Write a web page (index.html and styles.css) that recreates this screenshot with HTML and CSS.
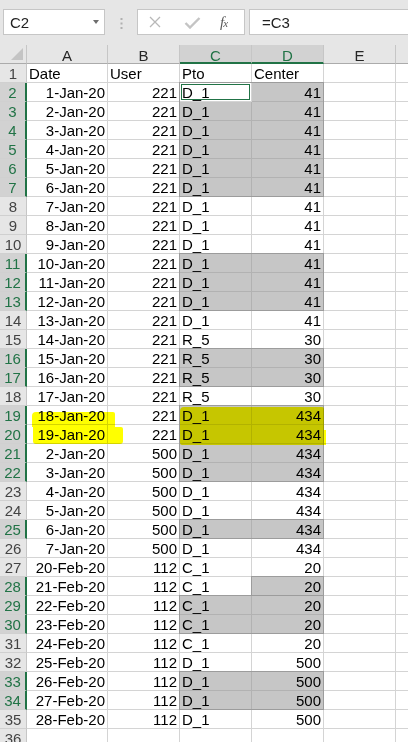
FILE: index.html
```html
<!DOCTYPE html>
<html>
<head>
<meta charset="utf-8">
<link rel="stylesheet" href="styles.css">
</head>
<body>
<div class="app">
  <div class="topbar">
    <div class="namebox"><span class="nbtext">C2</span><span class="caret"></span></div>
    <svg class="dots" width="3" height="11" viewBox="0 0 3 11"><rect x="0.5" y="0" width="2" height="2" fill="#b0b0b0"/><rect x="0.5" y="4.5" width="2" height="2" fill="#b0b0b0"/><rect x="0.5" y="9" width="2" height="2" fill="#b0b0b0"/></svg>
    <div class="fxbox">
      <svg class="ic-x" width="12" height="12" viewBox="0 0 12 12"><path d="M1 1 L11 11 M11 1 L1 11" stroke="#b8b8b8" stroke-width="1.3" fill="none"/></svg>
      <svg class="ic-ok" width="17" height="12" viewBox="0 0 17 12"><path d="M1.5 6 L6 10.5 L15.5 1" stroke="#c4c4c4" stroke-width="2.4" fill="none"/></svg>
      <span class="fx">f<span class="fxx">x</span></span>
    </div>
    <div class="formula">=C3</div>
  </div>

  <div class="sheet">
    <div class="corner"><svg width="26" height="18" viewBox="0 0 26 18"><path d="M23 3 L23 15 L11 15 Z" fill="#c4c4c4"/></svg></div>
    <div class="ch">A</div><div class="ch">B</div><div class="ch on">C</div><div class="ch on">D</div><div class="ch">E</div><div class="ch e"></div>

    <div class="rh">1</div><div class="c">Date</div><div class="c">User</div><div class="c">Pto</div><div class="c">Center</div><div class="c"></div><div class="c e"></div>
    <div class="rh on">2</div><div class="c r">1-Jan-20</div><div class="c r">221</div><div class="c act">D_1</div><div class="c r s">41</div><div class="c"></div><div class="c e"></div>
    <div class="rh on">3</div><div class="c r">2-Jan-20</div><div class="c r">221</div><div class="c s">D_1</div><div class="c r s">41</div><div class="c"></div><div class="c e"></div>
    <div class="rh on">4</div><div class="c r">3-Jan-20</div><div class="c r">221</div><div class="c s">D_1</div><div class="c r s">41</div><div class="c"></div><div class="c e"></div>
    <div class="rh on">5</div><div class="c r">4-Jan-20</div><div class="c r">221</div><div class="c s">D_1</div><div class="c r s">41</div><div class="c"></div><div class="c e"></div>
    <div class="rh on">6</div><div class="c r">5-Jan-20</div><div class="c r">221</div><div class="c s">D_1</div><div class="c r s">41</div><div class="c"></div><div class="c e"></div>
    <div class="rh on">7</div><div class="c r">6-Jan-20</div><div class="c r">221</div><div class="c s">D_1</div><div class="c r s">41</div><div class="c"></div><div class="c e"></div>
    <div class="rh">8</div><div class="c r">7-Jan-20</div><div class="c r">221</div><div class="c">D_1</div><div class="c r">41</div><div class="c"></div><div class="c e"></div>
    <div class="rh">9</div><div class="c r">8-Jan-20</div><div class="c r">221</div><div class="c">D_1</div><div class="c r">41</div><div class="c"></div><div class="c e"></div>
    <div class="rh">10</div><div class="c r">9-Jan-20</div><div class="c r">221</div><div class="c">D_1</div><div class="c r">41</div><div class="c"></div><div class="c e"></div>
    <div class="rh on">11</div><div class="c r">10-Jan-20</div><div class="c r">221</div><div class="c s">D_1</div><div class="c r s">41</div><div class="c"></div><div class="c e"></div>
    <div class="rh on">12</div><div class="c r">11-Jan-20</div><div class="c r">221</div><div class="c s">D_1</div><div class="c r s">41</div><div class="c"></div><div class="c e"></div>
    <div class="rh on">13</div><div class="c r">12-Jan-20</div><div class="c r">221</div><div class="c s">D_1</div><div class="c r s">41</div><div class="c"></div><div class="c e"></div>
    <div class="rh">14</div><div class="c r">13-Jan-20</div><div class="c r">221</div><div class="c">D_1</div><div class="c r">41</div><div class="c"></div><div class="c e"></div>
    <div class="rh">15</div><div class="c r">14-Jan-20</div><div class="c r">221</div><div class="c">R_5</div><div class="c r">30</div><div class="c"></div><div class="c e"></div>
    <div class="rh on">16</div><div class="c r">15-Jan-20</div><div class="c r">221</div><div class="c s">R_5</div><div class="c r s">30</div><div class="c"></div><div class="c e"></div>
    <div class="rh on">17</div><div class="c r">16-Jan-20</div><div class="c r">221</div><div class="c s">R_5</div><div class="c r s">30</div><div class="c"></div><div class="c e"></div>
    <div class="rh">18</div><div class="c r">17-Jan-20</div><div class="c r">221</div><div class="c">R_5</div><div class="c r">30</div><div class="c"></div><div class="c e"></div>
    <div class="rh on">19</div><div class="c r">18-Jan-20</div><div class="c r">221</div><div class="c s">D_1</div><div class="c r s">434</div><div class="c"></div><div class="c e"></div>
    <div class="rh on">20</div><div class="c r">19-Jan-20</div><div class="c r">221</div><div class="c s">D_1</div><div class="c r s">434</div><div class="c"></div><div class="c e"></div>
    <div class="rh on">21</div><div class="c r">2-Jan-20</div><div class="c r">500</div><div class="c s">D_1</div><div class="c r s">434</div><div class="c"></div><div class="c e"></div>
    <div class="rh on">22</div><div class="c r">3-Jan-20</div><div class="c r">500</div><div class="c s">D_1</div><div class="c r s">434</div><div class="c"></div><div class="c e"></div>
    <div class="rh">23</div><div class="c r">4-Jan-20</div><div class="c r">500</div><div class="c">D_1</div><div class="c r">434</div><div class="c"></div><div class="c e"></div>
    <div class="rh">24</div><div class="c r">5-Jan-20</div><div class="c r">500</div><div class="c">D_1</div><div class="c r">434</div><div class="c"></div><div class="c e"></div>
    <div class="rh on">25</div><div class="c r">6-Jan-20</div><div class="c r">500</div><div class="c s">D_1</div><div class="c r s">434</div><div class="c"></div><div class="c e"></div>
    <div class="rh">26</div><div class="c r">7-Jan-20</div><div class="c r">500</div><div class="c">D_1</div><div class="c r">434</div><div class="c"></div><div class="c e"></div>
    <div class="rh">27</div><div class="c r">20-Feb-20</div><div class="c r">112</div><div class="c">C_1</div><div class="c r">20</div><div class="c"></div><div class="c e"></div>
    <div class="rh on">28</div><div class="c r">21-Feb-20</div><div class="c r">112</div><div class="c">C_1</div><div class="c r s">20</div><div class="c"></div><div class="c e"></div>
    <div class="rh on">29</div><div class="c r">22-Feb-20</div><div class="c r">112</div><div class="c s">C_1</div><div class="c r s">20</div><div class="c"></div><div class="c e"></div>
    <div class="rh on">30</div><div class="c r">23-Feb-20</div><div class="c r">112</div><div class="c s">C_1</div><div class="c r s">20</div><div class="c"></div><div class="c e"></div>
    <div class="rh">31</div><div class="c r">24-Feb-20</div><div class="c r">112</div><div class="c">C_1</div><div class="c r">20</div><div class="c"></div><div class="c e"></div>
    <div class="rh">32</div><div class="c r">25-Feb-20</div><div class="c r">112</div><div class="c">D_1</div><div class="c r">500</div><div class="c"></div><div class="c e"></div>
    <div class="rh on">33</div><div class="c r">26-Feb-20</div><div class="c r">112</div><div class="c s">D_1</div><div class="c r s">500</div><div class="c"></div><div class="c e"></div>
    <div class="rh on">34</div><div class="c r">27-Feb-20</div><div class="c r">112</div><div class="c s">D_1</div><div class="c r s">500</div><div class="c"></div><div class="c e"></div>
    <div class="rh">35</div><div class="c r">28-Feb-20</div><div class="c r">112</div><div class="c">D_1</div><div class="c r">500</div><div class="c"></div><div class="c e"></div>
    <div class="rh">36</div><div class="c"></div><div class="c"></div><div class="c"></div><div class="c"></div><div class="c"></div><div class="c e"></div>

    <div class="range" style="grid-area: 3 / 4 / 9 / 6"></div>
    <div class="range" style="grid-area: 12 / 4 / 15 / 6"></div>
    <div class="range" style="grid-area: 17 / 4 / 19 / 6"></div>
    <div class="range" style="grid-area: 20 / 4 / 24 / 6"></div>
    <div class="range" style="grid-area: 26 / 4 / 27 / 6"></div>
    <div class="range" style="grid-area: 29 / 5 / 30 / 6"></div>
    <div class="range" style="grid-area: 30 / 4 / 32 / 6"></div>
    <div class="range" style="grid-area: 34 / 4 / 36 / 6"></div>

    <div class="hl hl-a19"></div>
    <div class="hl hl-a20"></div>
    <div class="hl hl-cd"></div>
    <div class="hl hl-cd-tail"></div>
  </div>
</div>
</body>
</html>
```

FILE: styles.css
```css
html, body {
  margin: 0;
  padding: 0;
  background: #ffffff;
}
body {
  width: 408px;
  height: 742px;
  overflow: hidden;
  font-family: "Liberation Sans", Arial, sans-serif;
}
.app {
  width: 408px;
}

/* ---------- formula bar ---------- */
.topbar {
  height: 45px;
  box-sizing: border-box;
  background: #e6e6e6;
  display: flex;
  align-items: flex-start;
  padding: 9px 0 0 3px;
}
.namebox {
  width: 102px;
  height: 26px;
  box-sizing: border-box;
  background: #fff;
  border: 1px solid #c6c6c6;
  display: flex;
  align-items: center;
  padding-left: 6px;
  font-size: 15px;
  color: #222;
}
.caret {
  margin-left: auto;
  margin-right: 5px;
  width: 0;
  height: 0;
  border-left: 3.5px solid transparent;
  border-right: 3.5px solid transparent;
  border-top: 4px solid #6d6d6d;
}
.dots {
  margin: 9px 0 0 15px;
  flex: none;
}
.fxbox {
  margin-left: 14px;
  width: 108px;
  height: 26px;
  box-sizing: border-box;
  background: #fff;
  border: 1px solid #c6c6c6;
  display: flex;
  align-items: center;
}
.ic-x {
  margin-left: 11px;
  flex: none;
}
.ic-ok {
  margin-left: 23px;
  margin-top: 1px;
  flex: none;
}
.fx {
  margin-left: 19px;
  font-family: "Liberation Serif", "Times New Roman", serif;
  font-style: italic;
  font-size: 15px;
  color: #5a5a5a;
  letter-spacing: -1px;
}
.fxx {
  font-size: 11px;
}
.formula {
  margin-left: 4px;
  flex: 1;
  height: 26px;
  box-sizing: border-box;
  background: #fff;
  border: 1px solid #c6c6c6;
  border-right: none;
  display: flex;
  align-items: center;
  padding-left: 12px;
  font-size: 15px;
  color: #222;
}

/* ---------- sheet grid ---------- */
.sheet {
  position: relative;
  display: grid;
  grid-template-columns: 27px 81px 72px 72px 72px 72px 1fr;
  grid-auto-rows: 19px;
  font-size: 15px;
  color: #000;
}
.sheet > div {
  box-sizing: border-box;
}
.corner {
  background: #e6e6e6;
  border-right: 1px solid #c6c6c6;
  border-bottom: 1px solid #ababab;
}
.corner svg {
  display: block;
}
.ch {
  background: #e6e6e6;
  border-right: 1px solid #c6c6c6;
  border-bottom: 1px solid #ababab;
  text-align: center;
  color: #262626;
  padding-top: 3px;
  line-height: 16px;
}
.ch.on {
  background: #d2d2d2;
  color: #217346;
  border-bottom: 2px solid #217346;
}
.rh {
  background: #e6e6e6;
  border-right: 1px solid #c6c6c6;
  border-bottom: 1px solid #d0d0d0;
  text-align: center;
  color: #444;
  padding-top: 2px;
  line-height: 16px;
}
.rh.on {
  background: #d2d2d2;
  color: #217346;
  border-right: 2px solid #217346;
}
.c {
  border-right: 1px solid #d4d4d4;
  border-bottom: 1px solid #d4d4d4;
  padding: 2px 2px 0 2px;
  line-height: 16px;
  white-space: nowrap;
}
.c.e, .ch.e {
  border-right: none;
}
.r {
  text-align: right;
}
.s {
  background: #c6c6c6;
  border-right-color: #b2b2b2;
  border-bottom-color: #b2b2b2;
}
.act {
  background: #fff;
  box-shadow: inset 0 0 0 1px #fff, inset 0 0 0 2px #217346;
}
.range {
  position: absolute;
  top: -1px;
  left: -1px;
  right: 0;
  bottom: 0;
  border: 1px solid #9c9c9c;
  pointer-events: none;
}

/* ---------- yellow highlighter marks ---------- */
.hl {
  position: absolute;
  background: #ffff00;
  mix-blend-mode: multiply;
  pointer-events: none;
}
.hl-a19 {
  grid-area: 20 / 2 / 21 / 3;
  top: 6px;
  left: 5px;
  width: 83px;
  height: 15px;
  border-radius: 4px 2px 0 0;
}
.hl-a20 {
  grid-area: 21 / 2 / 22 / 3;
  top: 2px;
  left: 6px;
  width: 90px;
  height: 17px;
  border-radius: 0 2px 3px 3px;
}
.hl-cd {
  grid-area: 20 / 4 / 22 / 6;
  top: 1px;
  left: 0;
  right: 0;
  bottom: -1px;
  border-radius: 4px 2px 0 2px;
}
.hl-cd-tail {
  grid-area: 21 / 5 / 22 / 6;
  top: 5px;
  right: -2px;
  width: 3px;
  height: 15px;
}
```
